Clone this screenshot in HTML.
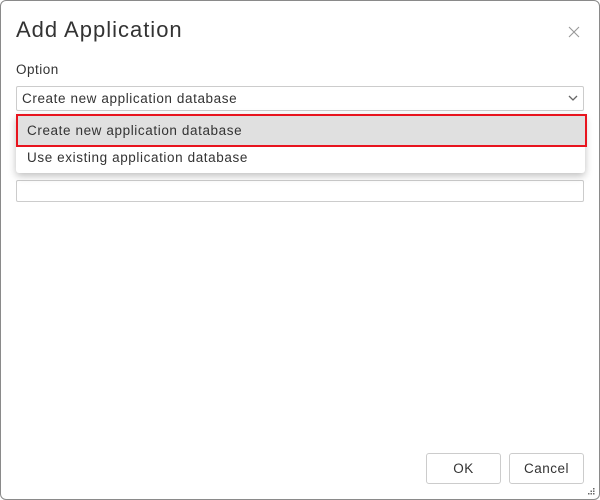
<!DOCTYPE html><html><head><style>
body{margin:0;width:600px;height:500px;background:#fff;font-family:"Liberation Sans",sans-serif;color:#333;position:relative;overflow:hidden}
.dlg{position:absolute;left:0;top:0;width:598px;height:498px;border:1px solid #8a8a8a;border-radius:6px}
.a{position:absolute}
.title{left:16px;top:17px;font-size:22px;color:#333;letter-spacing:1px}
.x{left:567px;top:25px;width:14px;height:14px}
.lab{left:16px;top:62px;font-size:13.5px;letter-spacing:0.5px}
.sel{left:16px;top:86px;width:566px;height:23px;border:1px solid #ccc;border-radius:2px;font-size:13.5px;line-height:23px;text-indent:5px;letter-spacing:0.6px}
.dd{left:16px;top:114px;width:569px;height:59px;background:#fff;border-radius:3px;box-shadow:0 3px 8px rgba(0,0,0,.25)}
.hi{left:16px;top:114px;width:567px;height:29px;background:#e0e0e0;border:2px solid #e8141e;font-size:13.5px;line-height:29px;text-indent:9px;letter-spacing:0.6px}
.o2{left:27px;top:150px;font-size:13.5px;letter-spacing:0.6px}
.in2{left:16px;top:180px;width:566px;height:20px;border:1px solid #ccc;border-radius:2px}
.btn{top:453px;height:29px;border:1px solid #ccc;border-radius:3px;font-size:13.5px;line-height:29px;text-align:center;letter-spacing:0.5px}
</style></head><body>
<div class="dlg"></div>
<div class="a title">Add Application</div>
<svg class="a x" viewBox="0 0 14 14"><path d="M2 2L12 12M12 2L2 12" stroke="#999" stroke-width="1.1"/></svg>
<div class="a lab">Option</div>
<div class="a sel">Create new application database</div>
<svg class="a" style="left:568px;top:95px" width="10" height="6" viewBox="0 0 10 6"><path d="M1 1L5 5L9 1" stroke="#666" stroke-width="1.3" fill="none"/></svg>
<div class="a in2"></div>
<div class="a dd"></div>
<div class="a hi">Create new application database</div>
<div class="a o2">Use existing application database</div>
<div class="a btn" style="left:426px;width:73px">OK</div>
<div class="a btn" style="left:509px;width:73px">Cancel</div>
<svg class="a" style="left:588px;top:488px" width="8" height="8"><g fill="#666"><rect x="5" y="0" width="1.5" height="1.5"/><rect x="2.5" y="2.5" width="1.5" height="1.5"/><rect x="5" y="2.5" width="1.5" height="1.5"/><rect x="0" y="5" width="1.5" height="1.5"/><rect x="2.5" y="5" width="1.5" height="1.5"/><rect x="5" y="5" width="1.5" height="1.5"/></g></svg>
</body></html>
